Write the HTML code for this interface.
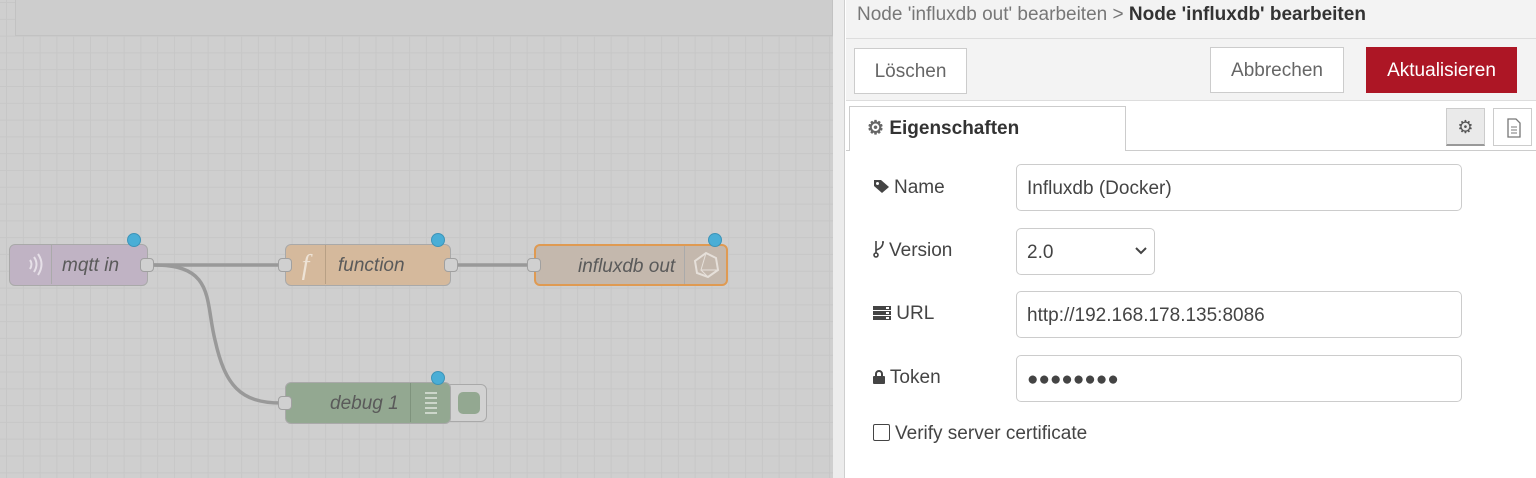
<!DOCTYPE html>
<html><head><meta charset="utf-8"><style>
*{box-sizing:border-box;margin:0;padding:0}
body{width:1536px;height:478px;overflow:hidden;position:relative;font-family:"Liberation Sans",sans-serif;background:#cfcfcf}
.canvas{position:absolute;left:0;top:0;width:833px;height:478px;background-color:#cfcfcf;
background-image:linear-gradient(to right,#c7c7c7 1px,transparent 1px),linear-gradient(to bottom,#c7c7c7 1px,transparent 1px);
background-size:16.8px 16.8px;background-position:6px 2px}
.topbox{position:absolute;left:15px;top:0;width:818px;height:36px;background:#cdcdcd;border:1px solid #c2c2c2;border-top:none}
.node{position:absolute;height:42px;border:1.5px solid #a9a9a9;border-radius:6px;font-style:italic;font-size:19px;color:#5a5a5a;line-height:41px}
.port{position:absolute;width:14px;height:14px;background:#d0d0d0;border:1.5px solid #a0a0a0;border-radius:4px}
.dot{position:absolute;width:14px;height:14px;border-radius:50%;background:#4aaed6;border:1px solid #3d94b8}
.panel{position:absolute;left:833px;top:0;width:703px;height:478px;background:#fff}
.strip{position:absolute;left:0;top:0;width:12px;height:478px;background:#ececec;border-right:1px solid #cfcfcf}
.hdr{position:absolute;left:13px;top:0;right:0;height:101px;background:#f3f3f3;border-bottom:1px solid #ddd}
.btn{position:absolute;height:46px;border:1px solid #ccc;background:#fff;color:#666;font-size:19px;text-align:center;line-height:46px}
.lbl{position:absolute;left:873px;font-size:19px;color:#444}
.inp{position:absolute;left:1016px;width:446px;height:47px;border:1px solid #ccc;border-radius:5px;background:#fff;font-size:19px;color:#444;padding-left:10px;line-height:47px}
</style></head><body>
<div class="canvas">
<div class="topbox"></div>
<svg style="position:absolute;left:0;top:0" width="833" height="478">
<path d="M154 265 H280" stroke="#999" stroke-width="3.5" fill="none"/>
<path d="M457 265 H529" stroke="#999" stroke-width="3.5" fill="none"/>
<path d="M154 265 C215 265,205 300,215 340 C225 385,240 403,281 403" stroke="#999" stroke-width="3.5" fill="none"/>
</svg>
<div class="node" style="left:9px;top:244px;width:139px;background:#c0b3c4">
<div style="position:absolute;left:0;top:0;width:42px;height:39px;border-right:1px solid #aaa"><svg width="42" height="39"><g fill="none" stroke="#e6e0e8" stroke-width="2"><path d="M20 15q3 4 0 9"/><path d="M24 12q5 7 0 15"/><path d="M28 9q7 10 0 21"/></g></svg></div>
<span style="position:absolute;left:52px">mqtt in</span></div>
<div class="port" style="left:140px;top:258px"></div>
<div class="dot" style="left:127px;top:233px"></div>
<div class="node" style="left:285px;top:244px;width:166px;background:#d5b99c">
<div style="position:absolute;left:0;top:0;width:40px;height:39px;border-right:1px solid #b8a085;color:#eee3d6;font-size:28px;text-align:center;font-family:'Liberation Serif',serif;font-style:italic">f</div>
<span style="position:absolute;left:52px">function</span></div>
<div class="port" style="left:278px;top:258px"></div>
<div class="port" style="left:444px;top:258px"></div>
<div class="dot" style="left:431px;top:233px"></div>
<div class="node" style="left:534px;top:244px;width:194px;background:#c4b8ad;border:2px solid #df9a52">
<span style="position:absolute;left:42px">influxdb out</span>
<div style="position:absolute;right:0;top:0;width:42px;height:38px;border-left:1px solid #aaa"><svg width="42" height="38"><polygon points="21,7 31,12 33,24 23,31 12,27 10,15" fill="none" stroke="#e6e0da" stroke-width="2"/><path d="M21 7L16 24L33 24M16 24L23 31" fill="none" stroke="#e6e0da" stroke-width="1"/></svg></div></div>
<div class="port" style="left:527px;top:258px"></div>
<div class="dot" style="left:708px;top:233px"></div>
<div style="position:absolute;left:445px;top:384px;width:42px;height:38px;border:1.5px solid #a9a9a9;border-radius:6px;background:#d2d2d2"><div style="position:absolute;left:12px;top:7px;width:22px;height:22px;background:#93a891;border-radius:5px"></div></div>
<div class="node" style="left:285px;top:382px;width:166px;background:#93a891">
<span style="position:absolute;left:44px">debug 1</span>
<div style="position:absolute;right:0;top:0;width:40px;height:39px;border-left:1px solid #7f937d"><svg width="40" height="39"><g stroke="#dfe6de" stroke-width="1.5"><path d="M14 10h12M14 15h12M14 20h12M14 25h12M14 30h12"/></g></svg></div></div>
<div class="port" style="left:278px;top:396px"></div>
<div class="dot" style="left:431px;top:371px"></div>
</div>
<div class="panel">
<div class="strip"></div>
<div class="hdr"></div>
<div style="position:absolute;left:24px;top:4px;font-size:19px;color:#777;white-space:nowrap">Node 'influxdb out' bearbeiten &gt; <b style="color:#333">Node 'influxdb' bearbeiten</b></div>
<div style="position:absolute;left:13px;top:38px;right:0;border-top:1px solid #ddd"></div>
</div>
<div class="btn" style="left:854px;top:48px;width:113px">Löschen</div>
<div class="btn" style="left:1210px;top:47px;width:134px">Abbrechen</div>
<div class="btn" style="left:1366px;top:47px;width:151px;background:#ad1625;border-color:#ad1625;color:#fff">Aktualisieren</div>
<div style="position:absolute;left:846px;top:150px;right:0;border-top:1px solid #ccc"></div>
<div style="position:absolute;left:849px;top:106px;width:277px;height:45px;background:#fff;border:1px solid #ccc;border-bottom:none;font-size:19px;font-weight:bold;color:#333;line-height:44px;padding-left:17px"><span style="color:#666">⚙</span> Eigenschaften</div>
<div style="position:absolute;left:1446px;top:108px;width:39px;height:38px;background:#eaeaea;border:1px solid #ccc;border-bottom:2px solid #999;text-align:center;line-height:36px;color:#555;font-size:18px">⚙</div>
<div style="position:absolute;left:1493px;top:108px;width:39px;height:38px;background:#fff;border:1px solid #ccc"><svg width="39" height="38"><path d="M14 10h8l4 4v14h-12z" fill="none" stroke="#777" stroke-width="1.3"/><path d="M17 18h6M17 21h6M17 24h6" stroke="#777"/></svg></div>
<div class="lbl" style="top:177px"><svg width="18" height="15" style="vertical-align:-1px;margin-right:3px"><path d="M1 1h7l8 7-7 6-8-7z" fill="#444"/><circle cx="4.5" cy="4.5" r="1.5" fill="#fff"/></svg>Name</div>
<div class="inp" style="top:164px">Influxdb (Docker)</div>
<div class="lbl" style="top:240px"><svg width="14" height="18" style="vertical-align:-2px;margin-right:2px"><g fill="none" stroke="#444" stroke-width="1.6"><circle cx="3" cy="15" r="2"/><path d="M3 13V1"/><path d="M3 10Q10 8 10 2"/><path d="M10 1v2"/></g></svg>Version</div>
<div class="inp" style="top:228px;width:139px">2.0</div>
<svg style="position:absolute;left:1134px;top:246px" width="14" height="10"><path d="M2 2l5 5 5-5" fill="none" stroke="#444" stroke-width="2"/></svg>
<div class="lbl" style="top:303px"><svg width="18" height="14" style="vertical-align:-1px"><g fill="#444"><rect x="0" y="0" width="18" height="4"/><rect x="0" y="5" width="18" height="4"/><rect x="0" y="10" width="18" height="4"/></g><g fill="#fff"><rect x="13" y="1" width="3" height="2"/><rect x="13" y="6" width="3" height="2"/><rect x="13" y="11" width="3" height="2"/></g></svg> URL</div>
<div class="inp" style="top:291px">http://192.168.178.135:8086</div>
<div class="lbl" style="top:367px"><svg width="12" height="14" style="vertical-align:-1px"><path d="M3 7V4a3 3 0 0 1 6 0v3" fill="none" stroke="#444" stroke-width="2"/><rect x="0" y="6" width="12" height="8" rx="1" fill="#444"/></svg> Token</div>
<div class="inp" style="top:355px">●●●●●●●●</div>
<div class="lbl" style="top:423px"><span style="display:inline-block;width:17px;height:17px;border:1.5px solid #444;border-radius:2px;vertical-align:-2px;margin-right:5px"></span>Verify server certificate</div>
</body></html>
